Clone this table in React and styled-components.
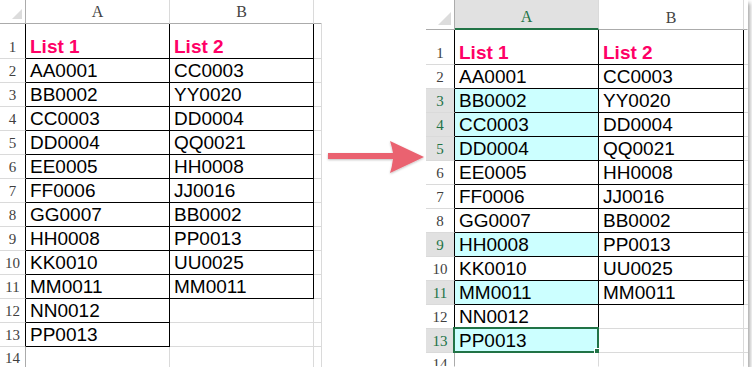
import React from 'react'
import styled, { createGlobalStyle } from 'styled-components'

const GlobalStyle = createGlobalStyle`
    html, body {
        margin: 0;
        padding: 0;
        background: #ffffff;
        overflow: hidden;
    }
`

const GRID = '#dadada'
const HEAD_LINE = '#ababab'
const GREEN = '#217346'

const LIST_1 = ['List 1', 'AA0001', 'BB0002', 'CC0003', 'DD0004', 'EE0005', 'FF0006', 'GG0007', 'HH0008', 'KK0010', 'MM0011', 'NN0012', 'PP0013']
const LIST_2 = ['List 2', 'CC0003', 'YY0020', 'DD0004', 'QQ0021', 'HH0008', 'JJ0016', 'BB0002', 'PP0013', 'UU0025', 'MM0011']
const MATCHED = [3, 4, 5, 9, 11, 13]

const Frame = styled.div`
    display: flex;
    align-items: flex-start;
    width: 748px;
    height: 367px;
    background: #ffffff;
    box-shadow: 2px 3px 4px rgba(0, 0, 0, 0.35);
    overflow: hidden;
    font-family: "Liberation Sans", Arial, sans-serif;
`

const Sheet = styled.div`
    display: grid;
    grid-template-columns: ${(p) => p.$cols};
    grid-template-rows: ${(p) => p.$rows};
    width: 322px;
    height: 367px;
    overflow: hidden;
    background: #ffffff;
`

const Corner = styled.div`
    position: relative;
    border-right: 1px solid ${HEAD_LINE};
    border-bottom: 1px solid ${HEAD_LINE};
    &::after {
        content: '';
        position: absolute;
        right: 3px;
        bottom: 4px;
        border-style: solid;
        border-width: 0 0 ${(p) => p.$tri}px ${(p) => p.$tri}px;
        border-color: transparent transparent #dcdcdc transparent;
    }
`

const ColHead = styled.div`
    display: flex;
    justify-content: center;
    align-items: flex-end;
    padding-bottom: 2px;
    box-sizing: border-box;
    font-family: "Liberation Serif", "Times New Roman", serif;
    font-size: 16px;
    line-height: 18px;
    color: ${(p) => (p.$sel ? GREEN : '#444444')};
    background: ${(p) => (p.$sel ? '#e1e1e1' : '#ffffff')};
    border-right: 1px solid ${(p) => (p.$last ? 'transparent' : GRID)};
    border-bottom: ${(p) => (p.$sel ? `2px solid ${GREEN}` : `1px solid ${HEAD_LINE}`)};
`

const RowHead = styled.div`
    display: flex;
    justify-content: center;
    align-items: ${(p) => (p.$cut ? 'flex-start' : 'flex-end')};
    padding-bottom: ${(p) => (p.$cut ? 0 : 2)}px;
    padding-top: ${(p) => (p.$cut ? 3 : 0)}px;
    overflow: hidden;
    box-sizing: border-box;
    font-family: "Liberation Serif", "Times New Roman", serif;
    font-size: 15px;
    line-height: 17px;
    color: ${(p) => (p.$sel ? GREEN : '#3f3f3f')};
    background: ${(p) => (p.$sel ? '#e1e1e1' : '#ffffff')};
    border-right: 1px solid ${(p) => (p.$edge ? '#000000' : HEAD_LINE)};
    border-bottom: 1px solid ${(p) => (p.$cut ? 'transparent' : GRID)};
`

const Cell = styled.div`
    position: relative;
    display: flex;
    align-items: flex-end;
    box-sizing: border-box;
    padding-left: 4px;
    font-size: 19px;
    line-height: 22px;
    white-space: nowrap;
    color: ${(p) => (p.$title ? '#ff0066' : '#000000')};
    font-weight: ${(p) => (p.$title ? 700 : 400)};
    background: ${(p) => (p.$fill ? '#ccffff' : '#ffffff')};
    border-right: 1px solid ${(p) => (p.$rb ? '#000000' : GRID)};
    border-bottom: 1px solid ${(p) => (p.$noLine ? 'transparent' : p.$bb ? '#000000' : GRID)};
`

const Selection = styled.div`
    position: absolute;
    left: -2px;
    top: -2px;
    right: -1px;
    bottom: -1px;
    border: 2px solid ${GREEN};
    pointer-events: none;
    &::after {
        content: '';
        position: absolute;
        right: -4px;
        bottom: -4px;
        width: 5px;
        height: 5px;
        background: ${GREEN};
        border: 1px solid #ffffff;
    }
`

const ArrowBox = styled.div`
    width: 104px;
    height: 40px;
    margin-top: 137px;
    flex: none;
`

function Arrow() {
    return (
        <ArrowBox>
            <svg width="104" height="40" viewBox="0 0 104 40">
                <defs>
                    <filter id="soft" x="-10%" y="-30%" width="120%" height="160%">
                        <feDropShadow dx="0" dy="1" stdDeviation="1" floodColor="#000000" floodOpacity="0.25" />
                    </filter>
                </defs>
                <path
                    d="M6 16 L71 16 Q70 10 68 4 L102 20 L68 36 Q70 30 71 22 L6 22 Z"
                    fill="#ea6270"
                    filter="url(#soft)"
                />
            </svg>
        </ArrowBox>
    )
}

function Spreadsheet({ cols, rows, tri, highlight }) {
    const rowCount = 14
    const cells = []

    for (let r = 1; r <= rowCount; r++) {
        const a = LIST_1[r - 1]
        const b = LIST_2[r - 1]
        const inA = r <= LIST_1.length
        const inB = r <= LIST_2.length
        const isMatch = highlight && MATCHED.includes(r)
        const last = r === rowCount
        cells.push(
            <RowHead key={`h${r}`} $sel={isMatch} $edge={inA} $cut={last}>{r}</RowHead>,
            <Cell key={`a${r}`} $title={r === 1} $fill={isMatch} $rb={inA || inB} $bb={inA} $noLine={last}>
                {a}
                {highlight && r === 13 ? <Selection /> : null}
            </Cell>,
            <Cell key={`b${r}`} $title={r === 1} $rb={inB} $bb={inB} $noLine={last}>{b}</Cell>,
            <Cell key={`c${r}`} $noLine={last} />,
        )
    }

    return (
        <Sheet $cols={cols} $rows={rows}>
            <Corner $tri={tri} />
            <ColHead $sel={highlight}>A</ColHead>
            <ColHead>B</ColHead>
            <ColHead $last />
            {cells}
        </Sheet>
    )
}

export default function App() {
    return (
        <>
            <GlobalStyle />
            <Frame>
                <Spreadsheet
                    cols="26px 144px 144px 8px"
                    rows="24px 35px repeat(12, 24px) 21px"
                    tri={10}
                />
                <Arrow />
                <Spreadsheet
                    cols="29px 144px 145px 4px"
                    rows="30px 35px repeat(12, 24px) 14px"
                    tri={13}
                    highlight
                />
            </Frame>
        </>
    )
}
